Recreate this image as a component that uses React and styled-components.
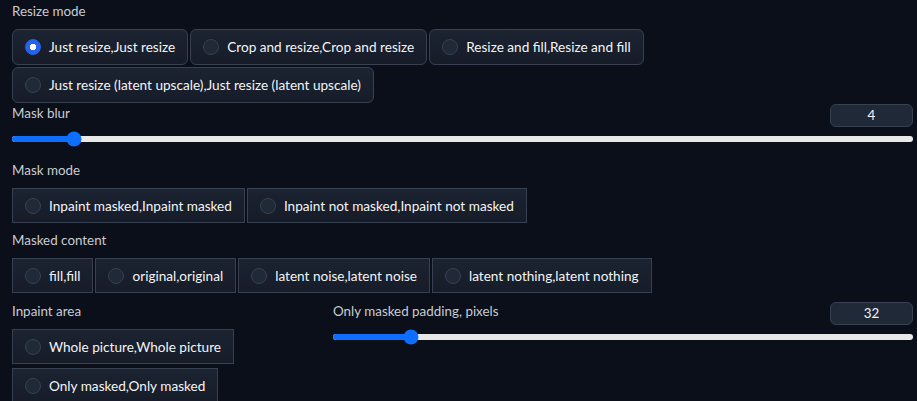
import React from "react";
import styled, { createGlobalStyle } from "styled-components";

const GlobalStyle = createGlobalStyle`
  html, body {
    margin: 0;
    background: #0b0f19;
  }
  body {
    font-family: "Lato", "Liberation Sans", sans-serif;
    overflow: hidden;
  }
`;

const resizeModes = [
  ["Just resize,Just resize", true],
  ["Crop and resize,Crop and resize"],
  ["Resize and fill,Resize and fill"],
  ["Just resize (latent upscale),Just resize (latent upscale)"],
];

const maskModes = [
  ["Inpaint masked,Inpaint masked"],
  ["Inpaint not masked,Inpaint not masked"],
];

const maskedContent = [
  ["fill,fill"],
  ["original,original"],
  ["latent noise,latent noise"],
  ["latent nothing,latent nothing"],
];

const inpaintArea = [
  ["Whole picture,Whole picture"],
  ["Only masked,Only masked"],
];

const RadioGroup = ({ label, options, rounded, stacked, top }) => (
  <Block $top={top}>
    <Label>{label}</Label>
    <Options $stacked={stacked}>
      {options.map(([text, checked]) => (
        <Option key={text} $rounded={rounded}>
          <Dot $checked={checked} />
          <span>{text}</span>
        </Option>
      ))}
    </Options>
  </Block>
);

const Slider = ({ label, value, min, max, top }) => {
  const pct = (value - min) / (max - min);
  const pos = `calc(7px + ${pct} * (100% - 14px))`;
  return (
    <Block $top={top}>
      <SliderHead>
        <Label>{label}</Label>
        <NumberBox>{value}</NumberBox>
      </SliderHead>
      <TrackArea>
        <Track>
          <Fill style={{ width: pos }} />
          <Thumb style={{ left: pos }} />
        </Track>
      </TrackArea>
    </Block>
  );
};

export default function App() {
  return (
    <Page>
      <GlobalStyle />
      <RadioGroup label="Resize mode" options={resizeModes} rounded top={2} />
      <Slider label="Mask blur" value={4} min={0} max={64} top={1} />
      <RadioGroup label="Mask mode" options={maskModes} top={11} />
      <RadioGroup label="Masked content" options={maskedContent} top={8} />
      <Columns>
        <RadioGroup label="Inpaint area" options={inpaintArea} stacked top={0} />
        <Slider
          label="Only masked padding, pixels"
          value={32}
          min={0}
          max={256}
          top={0}
        />
      </Columns>
    </Page>
  );
}

const Page = styled.div`
  padding: 0 4px 0 12px;
  display: flex;
  flex-direction: column;
`;

const Block = styled.div`
  margin-top: ${({ $top }) => $top}px;
  display: flex;
  flex-direction: column;
`;

const Label = styled.div`
  height: 18px;
  line-height: 18px;
  font-size: 13.4px;
  color: #c8ccd3;
  margin-bottom: 9px;
`;

const Options = styled.div`
  display: flex;
  flex-wrap: wrap;
  flex-direction: ${({ $stacked }) => ($stacked ? "column" : "row")};
  align-items: flex-start;
  gap: ${({ $stacked }) => ($stacked ? "4px" : "2px")};
`;

const Option = styled.div`
  display: flex;
  align-items: center;
  gap: 8px;
  height: ${({ $rounded }) => ($rounded ? "36px" : "35px")};
  box-sizing: border-box;
  padding: 0 12px;
  border: 1px solid #374151;
  border-radius: ${({ $rounded }) => ($rounded ? "6px" : "0")};
  background: linear-gradient(to bottom, #1c2331, #161c28);
  color: #f3f4f6;
  font-size: 13.6px;
  white-space: nowrap;
`;

const Dot = styled.span`
  width: 16px;
  height: 16px;
  box-sizing: border-box;
  border-radius: 50%;
  flex: none;
  border: 1px solid ${({ $checked }) => ($checked ? "#2563eb" : "#374151")};
  background: ${({ $checked }) =>
    $checked
      ? "radial-gradient(circle, #ffffff 0 3px, #2563eb 3.5px)"
      : "#1f2937"};
`;

const SliderHead = styled.div`
  display: flex;
  justify-content: space-between;
  align-items: flex-start;
  height: 24px;

  ${Label} {
    margin: 0;
  }
`;

const NumberBox = styled.div`
  width: 83px;
  height: 23px;
  box-sizing: border-box;
  border: 1px solid #374151;
  border-radius: 6px;
  background: #1f2937;
  color: #f3f4f6;
  font-size: 13.4px;
  line-height: 21px;
  text-align: center;
`;

const TrackArea = styled.div`
  height: 22px;
  display: flex;
  align-items: center;
`;

const Track = styled.div`
  position: relative;
  flex: 1;
  height: 6px;
  border-radius: 3px;
  background: #e8e8e8;
`;

const Fill = styled.div`
  height: 100%;
  border-radius: 3px 0 0 3px;
  background: #0e6fff;
`;

const Thumb = styled.div`
  position: absolute;
  top: 50%;
  width: 15px;
  height: 15px;
  border-radius: 50%;
  background: #0e6fff;
  transform: translate(-50%, -50%);
`;

const Columns = styled.div`
  margin-top: 9px;
  display: grid;
  grid-template-columns: 309px 1fr;
  column-gap: 12px;
`;
